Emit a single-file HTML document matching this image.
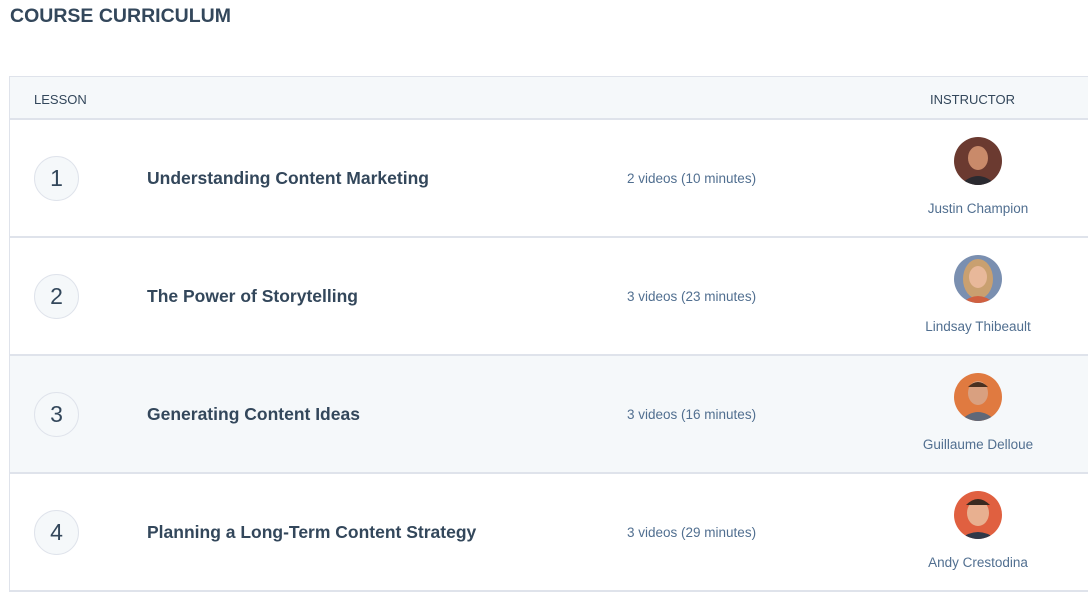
<!DOCTYPE html>
<html><head><style>
body{margin:0;width:1088px;height:572px;overflow:hidden;background:#fff;font-family:"Liberation Sans",sans-serif;color:#33475b}
h1{position:absolute;left:10px;top:5px;margin:0;font-size:19.5px;font-weight:bold;letter-spacing:0px;color:#33475b}
.tbl{position:absolute;left:9px;top:76px;width:1100px;border-left:1px solid #dfe3eb;border-top:1px solid #dfe3eb}
.hd{height:41px;background:#f5f8fa;border-bottom:2px solid #dfe3eb;position:relative;font-size:13px}
.hd span{position:absolute;top:15px}
.row{height:116px;border-bottom:2px solid #dfe3eb;position:relative}
.row.g{background:#f5f8fa}
.num{position:absolute;left:24px;top:36px;width:43px;height:43px;border:1px solid #dfe3eb;border-radius:50%;background:#f5f8fa;text-align:center;line-height:43px;font-size:23px}
.t{position:absolute;left:137px;top:48px;font-size:17.5px;font-weight:bold;color:#33475b}
.v{position:absolute;left:617px;top:51px;font-size:13.5px;color:#516f90}
.av{position:absolute;left:944px;top:17px;width:48px;height:48px;border-radius:50%;overflow:hidden}
.n{position:absolute;left:868px;width:200px;text-align:center;top:81px;font-size:13.5px;color:#516f90}
</style></head><body>
<h1>COURSE CURRICULUM</h1>
<div class="tbl">
<div class="hd"><span style="left:24px">LESSON</span><span style="left:920px">INSTRUCTOR</span></div>
<div class="row"><div class="num">1</div><div class="t">Understanding Content Marketing</div><div class="v">2 videos (10 minutes)</div>
<svg class="av" viewBox="0 0 48 48"><rect width="48" height="48" fill="#6b3a30"/><ellipse cx="24" cy="21" rx="10" ry="12" fill="#c98a6a"/><path d="M6 48 Q24 30 42 48Z" fill="#2a2a30"/></svg><div class="n">Justin Champion</div></div>
<div class="row"><div class="num">2</div><div class="t">The Power of Storytelling</div><div class="v">3 videos (23 minutes)</div>
<svg class="av" viewBox="0 0 48 48"><rect width="48" height="48" fill="#7a8fb0"/><ellipse cx="24" cy="24" rx="15" ry="20" fill="#c9a070"/><ellipse cx="24" cy="22" rx="9" ry="11" fill="#e8b89a"/><path d="M8 48 Q24 34 40 48Z" fill="#d06040"/></svg><div class="n">Lindsay Thibeault</div></div>
<div class="row g"><div class="num">3</div><div class="t">Generating Content Ideas</div><div class="v">3 videos (16 minutes)</div>
<svg class="av" viewBox="0 0 48 48"><rect width="48" height="48" fill="#e07a40"/><ellipse cx="24" cy="20" rx="10" ry="12" fill="#d9a080"/><path d="M14 14 Q24 4 34 14Z" fill="#4a3020"/><path d="M6 48 Q24 30 42 48Z" fill="#606878"/></svg><div class="n">Guillaume Delloue</div></div>
<div class="row"><div class="num">4</div><div class="t">Planning a Long-Term Content Strategy</div><div class="v">3 videos (29 minutes)</div>
<svg class="av" viewBox="0 0 48 48"><rect width="48" height="48" fill="#e06040"/><ellipse cx="24" cy="22" rx="11" ry="13" fill="#e8b090"/><path d="M12 14 Q24 2 36 14Z" fill="#3a2a20"/><path d="M6 48 Q24 34 42 48Z" fill="#303848"/></svg><div class="n">Andy Crestodina</div></div>
</div>
</body></html>
